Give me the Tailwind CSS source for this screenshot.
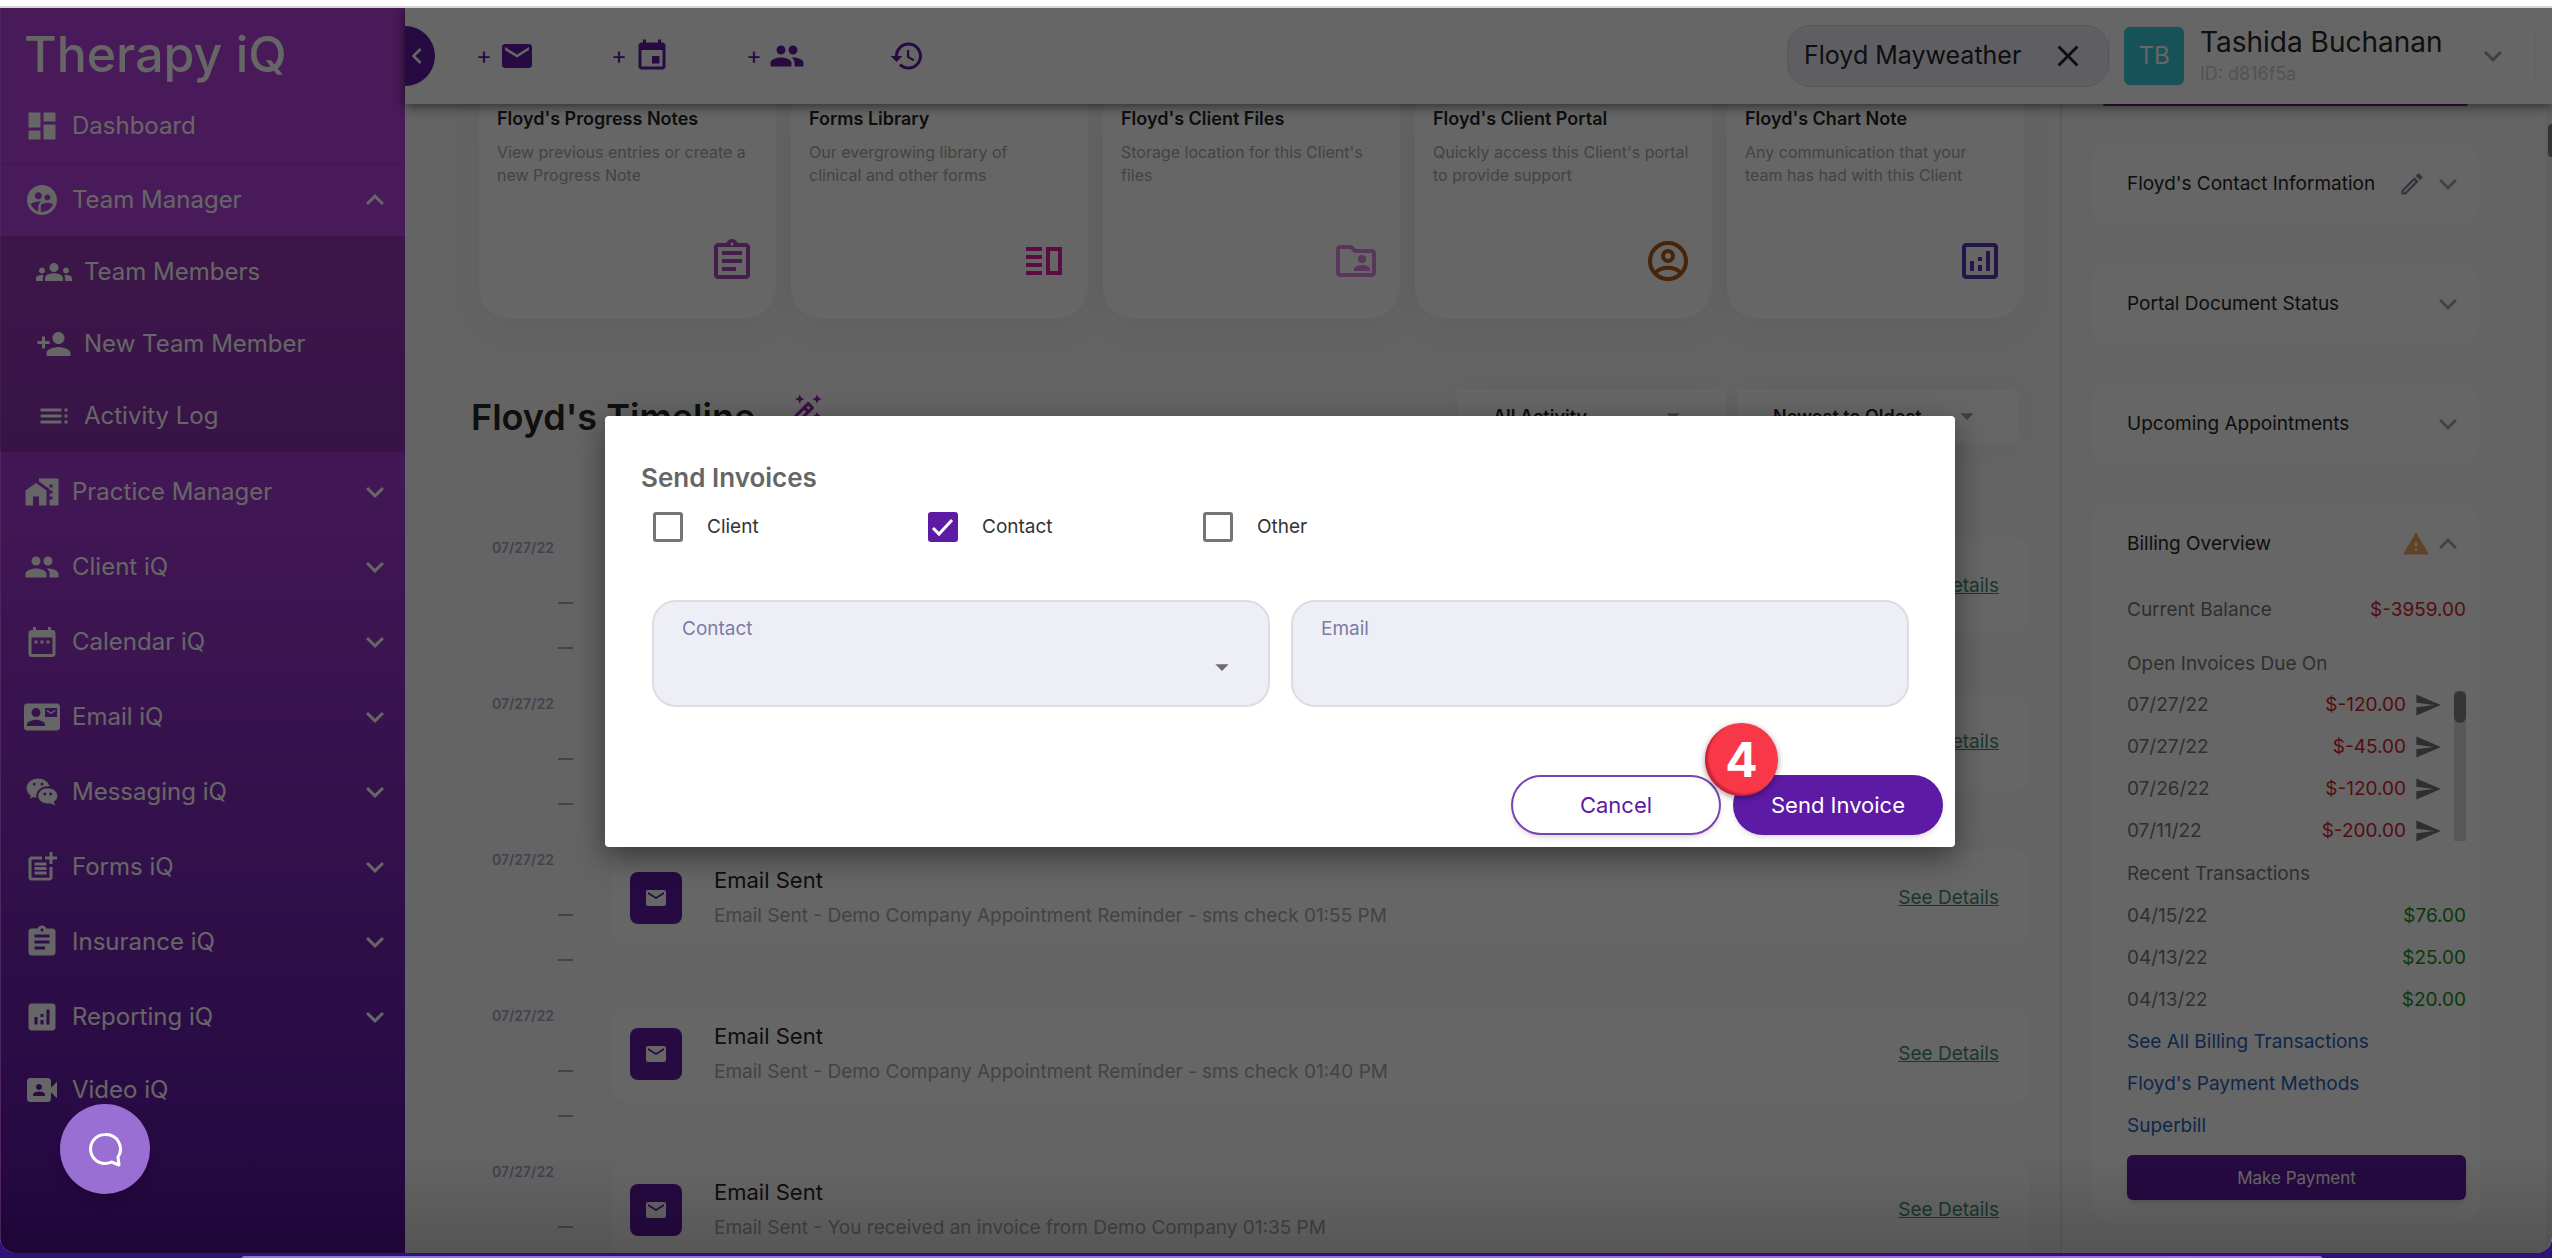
<!DOCTYPE html>
<html lang="en">
<head>
  <meta charset="UTF-8" />
  <meta name="viewport" content="width=device-width, initial-scale=1.0"/>
  <title>Therapy iQ | Send Invoices</title>
  <script src="https://cdn.jsdelivr.net/npm/@tailwindcss/browser@4"></script>
</head>
<body class="h-screen flex flex-col overflow-hidden bg-[#2f1277] font-[Inter,sans-serif] text-[#262626]">

  <!-- Icon set -->
  <svg class="hidden">
    <symbol id="i-dashboard" viewBox="0 0 24 24"><path d="M3 13h8V3H3v10zm0 8h8v-6H3v6zm10 0h8V11h-8v10zm0-18v6h8V3h-8z"/></symbol>
    <symbol id="i-team" viewBox="0 0 24 24"><path d="M11.99 2c-5.52 0-10 4.48-10 10s4.48 10 10 10 10-4.48 10-10-4.48-10-10-10zm3.61 6.34c1.07 0 1.93.86 1.93 1.93 0 1.07-.86 1.93-1.93 1.93-1.07 0-1.93-.86-1.93-1.93-.01-1.07.86-1.93 1.93-1.93zm-6-1.58c1.3 0 2.36 1.06 2.36 2.36 0 1.3-1.06 2.36-2.36 2.36s-2.36-1.06-2.36-2.36c0-1.31 1.05-2.36 2.36-2.36zm0 9.13v3.75c-2.4-.75-4.3-2.6-5.14-4.96 1.05-1.12 3.67-1.69 5.14-1.69.53 0 1.2.08 1.9.22-1.64.87-1.9 2.02-1.9 2.68zM11.99 20c-.27 0-.53-.01-.79-.04v-4.07c0-1.42 2.94-2.13 4.4-2.13 1.07 0 2.92.39 3.84 1.15-1.17 2.97-4.06 5.09-7.45 5.09z"/></symbol>
    <symbol id="i-groups" viewBox="0 0 24 24"><path d="M12 12.75c1.63 0 3.07.39 4.24.9 1.08.48 1.76 1.56 1.76 2.73V18H6v-1.61c0-1.18.68-2.26 1.76-2.73 1.17-.52 2.61-.91 4.24-.91zM4 13c1.1 0 2-.9 2-2s-.9-2-2-2-2 .9-2 2 .9 2 2 2zm1.13 1.1c-.37-.06-.74-.1-1.13-.1-.99 0-1.93.21-2.78.58C.48 14.9 0 15.62 0 16.43V18h4.5v-1.61c0-.83.23-1.61.63-2.29zM20 13c1.1 0 2-.9 2-2s-.9-2-2-2-2 .9-2 2 .9 2 2 2zm4 3.43c0-.81-.48-1.53-1.22-1.85-.85-.37-1.79-.58-2.78-.58-.39 0-.76.04-1.13.1.4.68.63 1.46.63 2.29V18H24v-1.57zM12 6c1.66 0 3 1.34 3 3s-1.34 3-3 3-3-1.34-3-3 1.34-3 3-3z"/></symbol>
    <symbol id="i-person-add" viewBox="0 0 24 24"><path d="M15 12c2.21 0 4-1.79 4-4s-1.79-4-4-4-4 1.79-4 4 1.79 4 4 4zm-9-2V7H4v3H1v2h3v3h2v-3h3v-2H6zm9 4c-2.67 0-8 1.34-8 4v2h16v-2c0-2.66-5.33-4-8-4z"/></symbol>
    <symbol id="i-toc" viewBox="0 0 24 24"><path d="M3 9h14V7H3v2zm0 4h14v-2H3v2zm0 4h14v-2H3v2zm16 0h2v-2h-2v2zm0-10v2h2V7h-2zm0 6h2v-2h-2v2z"/></symbol>
    <symbol id="i-practice" viewBox="0 0 24 24"><path d="M1 11v10h5v-6h4v6h5V11L8 6zM10 3v1.97l7 5V11h2v2h-2v2h2v2h-2v4h6V3H10zm9 6h-2V7h2v2z"/></symbol>
    <symbol id="i-people" viewBox="0 0 24 24"><path d="M16 11c1.66 0 2.99-1.34 2.99-3S17.66 5 16 5c-1.66 0-3 1.34-3 3s1.34 3 3 3zm-8 0c1.66 0 2.99-1.34 2.99-3S9.66 5 8 5C6.34 5 5 6.34 5 8s1.34 3 3 3zm0 2c-2.33 0-7 1.17-7 3.5V19h14v-2.5c0-2.33-4.67-3.5-7-3.5zm8 0c-.29 0-.62.02-.97.05 1.16.84 1.97 1.97 1.97 3.45V19h6v-2.5c0-2.33-4.67-3.5-7-3.5z"/></symbol>
    <symbol id="i-calendar" viewBox="0 0 24 24"><path d="M9 11H7v2h2v-2zm4 0h-2v2h2v-2zm4 0h-2v2h2v-2zm2-7h-1V2h-2v2H8V2H6v2H5c-1.11 0-1.99.9-1.99 2L3 20c0 1.1.89 2 2 2h14c1.1 0 2-.9 2-2V6c0-1.1-.9-2-2-2zm0 16H5V9h14v11z"/></symbol>
    <symbol id="i-contact-mail" viewBox="0 0 24 24"><path d="M21 8V7l-3 2-3-2v1l3 2 3-2zm1-5H2C.9 3 0 3.9 0 5v14c0 1.1.9 2 2 2h20c1.1 0 1.99-.9 1.99-2L24 5c0-1.1-.9-2-2-2zM8 6c1.66 0 3 1.34 3 3s-1.34 3-3 3-3-1.34-3-3 1.34-3 3-3zm6 12H2v-1c0-2 4-3.1 6-3.1s6 1.1 6 3.1v1zm8-6h-8V6h8v6z"/></symbol>
    <symbol id="i-messaging" viewBox="0 0 24 24"><path d="M15.85 8.14c.39 0 .77.03 1.14.08C16.31 5.25 13.19 3 9.44 3c-4.25 0-7.7 2.88-7.7 6.43 0 2.05 1.15 3.86 2.94 5.04L3.67 16.5l2.76-1.19c.59.21 1.21.38 1.87.47-.09-.39-.14-.79-.14-1.21-.01-3.54 3.44-6.43 7.69-6.43zM12 5.89c.53 0 .96.43.96.96s-.43.96-.96.96-.96-.43-.96-.96.43-.96.96-.96zM6.87 7.82c-.53 0-.96-.43-.96-.96s.43-.96.96-.96.96.43.96.96-.43.96-.96.96zM22.26 14.57c0-2.84-2.87-5.14-6.41-5.14s-6.41 2.3-6.41 5.14 2.87 5.14 6.41 5.14c.58 0 1.14-.08 1.67-.2L20.98 21l-1.2-2.4c1.5-.94 2.48-2.38 2.48-4.03zm-8.34-.32c-.53 0-.96-.43-.96-.96s.43-.96.96-.96.96.43.96.96c.01.53-.43.96-.96.96zm3.85 0c-.53 0-.96-.43-.96-.96s.43-.96.96-.96.96.43.96.96-.43.96-.96.96z"/></symbol>
    <symbol id="i-forms" viewBox="0 0 24 24"><path d="M17 19.22H5V7h7V5H5c-1.1 0-2 .9-2 2v12c0 1.1.9 2 2 2h12c1.1 0 2-.9 2-2v-7h-2v7.22zM19 2h-2v3h-3v2h3v3h2V7h3V5h-3V2zM7 9h8v2H7zM7 12h8v2H7zM7 15h8v2H7z"/></symbol>
    <symbol id="i-assignment" viewBox="0 0 24 24"><path d="M19 3h-4.18C14.4 1.84 13.3 1 12 1c-1.3 0-2.4.84-2.82 2H5c-1.1 0-2 .9-2 2v14c0 1.1.9 2 2 2h14c1.1 0 2-.9 2-2V5c0-1.1-.9-2-2-2zm-7 0c.55 0 1 .45 1 1s-.45 1-1 1-1-.45-1-1 .45-1 1-1zm2 14H7v-2h7v2zm3-4H7v-2h10v2zm0-4H7V7h10v2z"/></symbol>
    <symbol id="i-analytics" viewBox="0 0 24 24"><path d="M19 3H5c-1.1 0-2 .9-2 2v14c0 1.1.9 2 2 2h14c1.1 0 2-.9 2-2V5c0-1.1-.9-2-2-2zM9 17H7v-5h2v5zm4 0h-2v-3h2v3zm0-5h-2v-2h2v2zm4 5h-2V7h2v10z"/></symbol>
    <symbol id="i-video" viewBox="0 0 24 24"><path d="M18 10.48V6c0-1.1-.9-2-2-2H4c-1.1 0-2 .9-2 2v12c0 1.1.9 2 2 2h12c1.1 0 2-.9 2-2v-4.48l4 3.98v-11l-4 3.98zM10 8c1.1 0 2 .9 2 2s-.9 2-2 2-2-.9-2-2 .9-2 2-2zm4 8H6v-.57c0-.81.48-1.53 1.22-1.85.85-.37 1.79-.58 2.78-.58.99 0 1.93.21 2.78.58.74.32 1.22 1.04 1.22 1.85V16z"/></symbol>
    <symbol id="i-down" viewBox="0 0 24 24"><path d="M16.59 8.59 12 13.17 7.41 8.59 6 10l6 6 6-6z"/></symbol>
    <symbol id="i-up" viewBox="0 0 24 24"><path d="m12 8-6 6 1.41 1.41L12 10.83l4.59 4.58L18 14z"/></symbol>
    <symbol id="i-left" viewBox="0 0 24 24"><path d="M15.41 7.41 14 6l-6 6 6 6 1.41-1.41L10.83 12z"/></symbol>
    <symbol id="i-mail" viewBox="0 0 24 24"><path d="M20 4H4c-1.1 0-1.99.9-1.99 2L2 18c0 1.1.9 2 2 2h16c1.1 0 2-.9 2-2V6c0-1.1-.9-2-2-2zm0 4-8 5-8-5V6l8 5 8-5v2z"/></symbol>
    <symbol id="i-event" viewBox="0 0 24 24"><path d="M17 12h-5v5h5v-5zM16 1v2H8V1H6v2H5c-1.11 0-1.99.9-1.99 2L3 19c0 1.1.89 2 2 2h14c1.1 0 2-.9 2-2V5c0-1.1-.9-2-2-2h-1V1h-2zm3 18H5V8h14v11z"/></symbol>
    <symbol id="i-history" viewBox="0 0 24 24"><path d="M13 3c-4.97 0-9 4.03-9 9H1l3.89 3.89.07.14L9 12H6c0-3.87 3.13-7 7-7s7 3.13 7 7-3.13 7-7 7c-1.93 0-3.68-.79-4.94-2.06l-1.42 1.42C8.27 19.99 10.51 21 13 21c4.97 0 9-4.03 9-9s-4.03-9-9-9zm-1 5v5l4.28 2.54.72-1.21-3.5-2.08V8H12z"/></symbol>
    <symbol id="i-close" viewBox="0 0 24 24"><path d="M19 6.41 17.59 5 12 10.59 6.41 5 5 6.41 10.59 12 5 17.59 6.41 19 12 13.41 17.59 19 19 17.59 13.41 12z"/></symbol>
    <symbol id="i-notes" viewBox="0 0 24 24"><path fill-rule="evenodd" d="M19 3h-4.18C14.4 1.84 13.3 1 12 1c-1.3 0-2.4.84-2.82 2H5c-1.1 0-2 .9-2 2v14c0 1.1.9 2 2 2h14c1.1 0 2-.9 2-2V5c0-1.1-.9-2-2-2zm-7-.25c.41 0 .75.34.75.75s-.34.75-.75.75-.75-.34-.75-.75.34-.75.75-.75zM19 19H5V5h14v14z"/><path d="M7 7h10v2H7zM7 11h10v2H7zM7 15h7v2H7z"/></symbol>
    <symbol id="i-split" viewBox="0 0 24 24"><path fill-rule="evenodd" d="M3 15h8v-2H3v2zm0 4h8v-2H3v2zm0-8h8V9H3v2zm0-6v2h8V5H3zm10 0h8v14h-8V5zm2 2v10h4V7h-4z"/></symbol>
    <symbol id="i-folder" viewBox="0 0 24 24"><path fill-rule="evenodd" d="M20 6h-8l-2-2H4c-1.1 0-2 .9-2 2v12c0 1.1.9 2 2 2h16c1.1 0 2-.9 2-2V8c0-1.1-.9-2-2-2zm0 12H4V6h5.17l2 2H20v10z"/><circle cx="15" cy="11" r="2"/><path d="M11 17h8v-1c0-1.33-2.67-2-4-2s-4 .67-4 2v1z"/></symbol>
    <symbol id="i-account" viewBox="0 0 24 24"><g fill="none" stroke="currentColor" stroke-width="2"><circle cx="12" cy="12" r="9"/><circle cx="12" cy="9.5" r="2.5"/><path d="M5.8 17.8c1.6-1.6 4-2.4 6.200-2.400s4.600.8 6.200 2.400"/></g></symbol>
    <symbol id="i-chart" viewBox="0 0 24 24"><path fill-rule="evenodd" d="M19 3H5c-1.1 0-2 .9-2 2v14c0 1.1.9 2 2 2h14c1.1 0 2-.9 2-2V5c0-1.1-.9-2-2-2zm0 16H5V5h14v14z"/><path d="M7 12h2v5H7zM15 7h2v10h-2zM11 14h2v3h-2zM11 10h2v2h-2z"/></symbol>
    <symbol id="i-edit" viewBox="0 0 24 24"><path d="m14.060 9.020.92.92L5.920 19H5v-.92l9.060-9.060M17.660 3c-.25 0-.51.1-.7.29l-1.830 1.830 3.750 3.750 1.830-1.830c.39-.39.39-1.020 0-1.410l-2.340-2.340c-.2-.2-.45-.29-.71-.29zm-3.600 3.190L3 17.250V21h3.750L17.810 9.940l-3.750-3.750z"/></symbol>
    <symbol id="i-warning" viewBox="0 0 24 24"><path d="M1 21h22L12 2 1 21zm12-3h-2v-2h2v2zm0-4h-2v-4h2v4z"/></symbol>
    <symbol id="i-send" viewBox="0 0 24 24"><path d="M2.010 21 23 12 2.010 3 2 10l15 2-15 2z"/></symbol>
    <symbol id="i-wand" viewBox="0 0 24 24"><path fill-rule="evenodd" d="m20 7 .94-2.060L23 4l-2.060-.94L20 1l-.94 2.060L17 4l2.060.94zM8.500 7l.94-2.060L11.500 4l-2.060-.94L8.500 1l-.94 2.060L5.500 4l2.060.94zM20 12.500l-.94 2.060-2.060.94 2.060.94.94 2.060.94-2.060L23 15.500l-2.060-.94zM17.710 9.120l-2.830-2.830C14.680 6.100 14.430 6 14.170 6c-.26 0-.51.1-.71.290L2.290 17.460c-.39.39-.39 1.020 0 1.410l2.830 2.830c.2.200.45.300.71.300s.51-.1.710-.29l11.170-11.170c.39-.39.39-1.030 0-1.420zM14.170 8.420l1.410 1.410-1.290 1.290-1.410-1.410 1.290-1.290zM5.830 19.590l-1.410-1.410 7.050-7.050 1.410 1.410-7.050 7.050z"/></symbol>
    <symbol id="i-caret" viewBox="0 0 24 24"><path d="m7 10 5 5 5-5z"/></symbol>
  </svg>

  <div class="h-2 shrink-0 bg-white border-b-2 border-[#d4d6d4]"></div>

  <div class="relative flex-1 min-h-0 flex overflow-hidden rounded-b-2xl bg-[#f9f9f9]">

    <!-- Sidebar -->
    <aside class="w-[405px] shrink-0 bg-linear-to-b from-[#b741df] from-25% to-[#5811a0] shadow-[inset_1px_0_0_#c860ea] text-white text-2xl">
      <div class="h-[84px] pl-6 pt-2 flex items-center text-[50px] leading-none font-medium">Therapy iQ</div>
      <nav>
        <a href="#" class="h-[72px] pl-6 pr-3 pb-1 flex items-center gap-3 border-b border-black/10"><svg class="size-9 fill-current"><use href="#i-dashboard"/></svg>Dashboard</a>
        <a href="#" class="h-[72px] pl-6 pr-3 flex items-center gap-3"><svg class="size-9 fill-current"><use href="#i-team"/></svg>Team Manager<svg class="size-9 fill-current ml-auto"><use href="#i-up"/></svg></a>
        <div class="bg-black/18 mb-[2px]">
          <a href="#" class="h-[72px] pl-9 flex items-center gap-3"><svg class="size-9 fill-current"><use href="#i-groups"/></svg>Team Members</a>
          <a href="#" class="h-[72px] pl-9 flex items-center gap-3"><svg class="size-9 fill-current"><use href="#i-person-add"/></svg>New Team Member</a>
          <a href="#" class="h-[72px] pl-9 flex items-center gap-3"><svg class="size-9 fill-current"><use href="#i-toc"/></svg>Activity Log</a>
        </div>
        <a href="#" class="h-[75px] pl-6 pr-3 flex items-center gap-3"><svg class="size-9 fill-current"><use href="#i-practice"/></svg>Practice Manager<svg class="size-9 fill-current ml-auto"><use href="#i-down"/></svg></a>
        <a href="#" class="h-[75px] pl-6 pr-3 flex items-center gap-3"><svg class="size-9 fill-current"><use href="#i-people"/></svg>Client iQ<svg class="size-9 fill-current ml-auto"><use href="#i-down"/></svg></a>
        <a href="#" class="h-[75px] pl-6 pr-3 flex items-center gap-3"><svg class="size-9 fill-current"><use href="#i-calendar"/></svg>Calendar iQ<svg class="size-9 fill-current ml-auto"><use href="#i-down"/></svg></a>
        <a href="#" class="h-[75px] pl-6 pr-3 flex items-center gap-3"><svg class="size-9 fill-current"><use href="#i-contact-mail"/></svg>Email iQ<svg class="size-9 fill-current ml-auto"><use href="#i-down"/></svg></a>
        <a href="#" class="h-[75px] pl-6 pr-3 flex items-center gap-3"><svg class="size-9 fill-current"><use href="#i-messaging"/></svg>Messaging iQ<svg class="size-9 fill-current ml-auto"><use href="#i-down"/></svg></a>
        <a href="#" class="h-[75px] pl-6 pr-3 flex items-center gap-3"><svg class="size-9 fill-current"><use href="#i-forms"/></svg>Forms iQ<svg class="size-9 fill-current ml-auto"><use href="#i-down"/></svg></a>
        <a href="#" class="h-[75px] pl-6 pr-3 flex items-center gap-3"><svg class="size-9 fill-current"><use href="#i-assignment"/></svg>Insurance iQ<svg class="size-9 fill-current ml-auto"><use href="#i-down"/></svg></a>
        <a href="#" class="h-[75px] pl-6 pr-3 flex items-center gap-3"><svg class="size-9 fill-current"><use href="#i-analytics"/></svg>Reporting iQ<svg class="size-9 fill-current ml-auto"><use href="#i-down"/></svg></a>
        <a href="#" class="h-[72px] pl-6 pr-3 flex items-center gap-3"><svg class="size-9 fill-current"><use href="#i-video"/></svg>Video iQ</a>
      </nav>
    </aside>

    <div class="flex-1 min-w-0 flex flex-col">

      <!-- Top bar -->
      <header class="relative z-10 h-24 shrink-0 flex items-center bg-white shadow-[0_2px_12px_rgba(0,0,0,0.6)] pr-4">
        <button type="button" aria-label="Collapse menu" class="w-[30px] h-[60px] rounded-r-full bg-[#5f19a3] text-white"><svg class="size-8 fill-current -ml-1"><use href="#i-left"/></svg></button>
        <div class="flex items-center ml-[41px] text-[#5f19a3] text-2xl">
          <button type="button" aria-label="New email" class="w-[135px] flex items-center gap-2"><span class="w-[15px]">+</span><svg class="size-9 fill-current"><use href="#i-mail"/></svg></button>
          <button type="button" aria-label="New event" class="w-[135px] flex items-center gap-2"><span class="w-[15px]">+</span><svg class="size-9 fill-current"><use href="#i-event"/></svg></button>
          <button type="button" aria-label="New client" class="w-[135px] flex items-center gap-2"><span class="w-[15px]">+</span><svg class="size-9 fill-current"><use href="#i-people"/></svg></button>
          <button type="button" aria-label="History" class="ml-2"><svg class="size-9 fill-current"><use href="#i-history"/></svg></button>
        </div>
        <div class="ml-auto w-[322px] h-[62px] flex items-center rounded-3xl border border-[#d5d5dc] bg-[#eeeef7] pl-4 pr-[22px]">
          <input type="text" aria-label="Search clients" value="Floyd Mayweather" class="flex-1 min-w-0 text-[25px] outline-none"/>
          <button type="button" aria-label="Clear"><svg class="size-9 fill-current"><use href="#i-close"/></svg></button>
        </div>
        <div class="w-[427px] h-[60px] flex items-center rounded-lg border border-[#f4f4f4] pl-[14px] pr-6">
          <div class="w-[60px] h-[58px] rounded-md bg-[#3accdf] text-white text-2xl flex items-center justify-center">TB</div>
          <div class="ml-4 pt-1">
            <p class="text-[28px] leading-8">Tashida Buchanan</p>
            <p class="text-lg leading-8 text-[#d0d0d0]">ID: d816f5a</p>
          </div>
          <button type="button" aria-label="Account menu" class="ml-auto text-[#a0a0a0]"><svg class="size-9 fill-current"><use href="#i-down"/></svg></button>
        </div>
      </header>

      <div class="flex-1 min-h-0 flex">

        <main class="flex-1 min-w-0 pl-[66px] pr-[30px]">
          <!-- Shortcut cards -->
          <div class="grid grid-cols-5 gap-[15px] ml-2 mr-[6px]">
            <section class="h-[215px] flex flex-col rounded-b-[32px] bg-white shadow-[0_10px_40px_rgba(0,0,0,0.05)] pl-[18px] pr-5 pb-[34px]">
              <h3 class="text-lg font-semibold leading-[30px]">Floyd's Progress Notes</h3>
              <p class="mt-[7px] text-base leading-[23px] text-[#a8a8a8]">View previous entries or create a new Progress Note</p>
              <svg class="size-12 mt-auto ml-auto fill-[#aa4fc4]"><use href="#i-notes"/></svg>
            </section>
            <section class="h-[215px] flex flex-col rounded-b-[32px] bg-white shadow-[0_10px_40px_rgba(0,0,0,0.05)] pl-[18px] pr-5 pb-[34px]">
              <h3 class="text-lg font-semibold leading-[30px]">Forms Library</h3>
              <p class="mt-[7px] text-base leading-[23px] text-[#a8a8a8]">Our evergrowing library of<br>clinical and other forms</p>
              <svg class="size-12 mt-auto ml-auto fill-[#e81ca8]"><use href="#i-split"/></svg>
            </section>
            <section class="h-[215px] flex flex-col rounded-b-[32px] bg-white shadow-[0_10px_40px_rgba(0,0,0,0.05)] pl-[18px] pr-5 pb-[34px]">
              <h3 class="text-lg font-semibold leading-[30px]">Floyd's Client Files</h3>
              <p class="mt-[7px] text-base leading-[23px] text-[#a8a8a8]">Storage location for this Client's files</p>
              <svg class="size-12 mt-auto ml-auto fill-[#dc8be0]"><use href="#i-folder"/></svg>
            </section>
            <section class="h-[215px] flex flex-col rounded-b-[32px] bg-white shadow-[0_10px_40px_rgba(0,0,0,0.05)] pl-[18px] pr-5 pb-[34px]">
              <h3 class="text-lg font-semibold leading-[30px]">Floyd's Client Portal</h3>
              <p class="mt-[7px] text-base leading-[23px] text-[#a8a8a8]">Quickly access this Client's portal to provide support</p>
              <svg class="size-12 mt-auto ml-auto text-[#b55a16]"><use href="#i-account"/></svg>
            </section>
            <section class="h-[215px] flex flex-col rounded-b-[32px] bg-white shadow-[0_10px_40px_rgba(0,0,0,0.05)] pl-[18px] pr-5 pb-[34px]">
              <h3 class="text-lg font-semibold leading-[30px]">Floyd's Chart Note</h3>
              <p class="mt-[7px] text-base leading-[23px] text-[#a8a8a8]">Any communication that your team has had with this Client</p>
              <svg class="size-12 mt-auto ml-auto fill-[#5a35b8]"><use href="#i-chart"/></svg>
            </section>
          </div>

          <!-- Timeline -->
          <div class="mt-[71px] h-[54px] flex items-center pr-[11px]">
            <h2 class="text-4xl font-semibold">Floyd's Timeline</h2>
            <svg class="size-9 ml-8 mb-3 fill-[#9c1fb0]"><use href="#i-wand"/></svg>
            <div class="relative ml-auto w-[268px] h-full">
              <select aria-label="Activity filter" class="appearance-none w-full h-full rounded bg-white shadow-[0_0_30px_rgba(0,0,0,0.03)] pl-9 text-lg font-semibold"><option>All Activity</option></select>
              <svg class="absolute right-9 top-2.5 size-8 fill-[#9a9ec0] pointer-events-none"><use href="#i-caret"/></svg>
            </div>
            <div class="relative ml-3 w-[282px] h-full">
              <select aria-label="Sort order" class="appearance-none w-full h-full rounded bg-white shadow-[0_0_30px_rgba(0,0,0,0.03)] pl-9 text-lg font-semibold"><option>Newest to Oldest</option></select>
              <svg class="absolute right-9 top-2.5 size-8 fill-[#9a9ec0] pointer-events-none"><use href="#i-caret"/></svg>
            </div>
          </div>

          <div class="mt-[94px]">
            <article class="h-[156px] flex">
              <div class="w-[141px] shrink-0 pr-[39px] text-[#a3a7c4]">
                <time class="block pl-[21px] text-sm leading-5 font-semibold">07/27/22</time>
                <div class="mt-11 ml-auto w-[15px] border-t-2 border-current"></div>
                <div class="mt-[43px] ml-auto w-[15px] border-t-2 border-current"></div>
              </div>
              <div class="flex-1 h-24 flex items-start rounded-2xl bg-white px-[18px] pt-[22px] pr-[31px]">
                <div class="size-[52px] rounded-lg bg-[#5f19a3] text-white flex items-center justify-center"><svg class="size-6 fill-current"><use href="#i-mail"/></svg></div>
                <div class="ml-8 -mt-2">
                  <h4 class="text-[22px] leading-8">Email Sent</h4>
                  <p class="mt-1 text-[19px] leading-8 text-[#a8a8a8]">Email Sent - Demo Company Appointment Reminder - sms check 02:10 PM</p>
                </div>
                <a href="#" class="ml-auto mt-3 text-[19px] leading-7 underline text-[#3f8c76]">See Details</a>
              </div>
            </article>
            <article class="h-[156px] flex">
              <div class="w-[141px] shrink-0 pr-[39px] text-[#a3a7c4]">
                <time class="block pl-[21px] text-sm leading-5 font-semibold">07/27/22</time>
                <div class="mt-11 ml-auto w-[15px] border-t-2 border-current"></div>
                <div class="mt-[43px] ml-auto w-[15px] border-t-2 border-current"></div>
              </div>
              <div class="flex-1 h-24 flex items-start rounded-2xl bg-white px-[18px] pt-[22px] pr-[31px]">
                <div class="size-[52px] rounded-lg bg-[#5f19a3] text-white flex items-center justify-center"><svg class="size-6 fill-current"><use href="#i-mail"/></svg></div>
                <div class="ml-8 -mt-2">
                  <h4 class="text-[22px] leading-8">Email Sent</h4>
                  <p class="mt-1 text-[19px] leading-8 text-[#a8a8a8]">Email Sent - Demo Company Appointment Reminder - sms check 02:00 PM</p>
                </div>
                <a href="#" class="ml-auto mt-3 text-[19px] leading-7 underline text-[#3f8c76]">See Details</a>
              </div>
            </article>
            <article class="h-[156px] flex">
              <div class="w-[141px] shrink-0 pr-[39px] text-[#a3a7c4]">
                <time class="block pl-[21px] text-sm leading-5 font-semibold">07/27/22</time>
                <div class="mt-11 ml-auto w-[15px] border-t-2 border-current"></div>
                <div class="mt-[43px] ml-auto w-[15px] border-t-2 border-current"></div>
              </div>
              <div class="flex-1 h-24 flex items-start rounded-2xl bg-white px-[18px] pt-[22px] pr-[31px]">
                <div class="size-[52px] rounded-lg bg-[#5f19a3] text-white flex items-center justify-center"><svg class="size-6 fill-current"><use href="#i-mail"/></svg></div>
                <div class="ml-8 -mt-2">
                  <h4 class="text-[22px] leading-8">Email Sent</h4>
                  <p class="mt-1 text-[19px] leading-8 text-[#a8a8a8]">Email Sent - Demo Company Appointment Reminder - sms check 01:55 PM</p>
                </div>
                <a href="#" class="ml-auto mt-3 text-[19px] leading-7 underline text-[#3f8c76]">See Details</a>
              </div>
            </article>
            <article class="h-[156px] flex">
              <div class="w-[141px] shrink-0 pr-[39px] text-[#a3a7c4]">
                <time class="block pl-[21px] text-sm leading-5 font-semibold">07/27/22</time>
                <div class="mt-11 ml-auto w-[15px] border-t-2 border-current"></div>
                <div class="mt-[43px] ml-auto w-[15px] border-t-2 border-current"></div>
              </div>
              <div class="flex-1 h-24 flex items-start rounded-2xl bg-white px-[18px] pt-[22px] pr-[31px]">
                <div class="size-[52px] rounded-lg bg-[#5f19a3] text-white flex items-center justify-center"><svg class="size-6 fill-current"><use href="#i-mail"/></svg></div>
                <div class="ml-8 -mt-2">
                  <h4 class="text-[22px] leading-8">Email Sent</h4>
                  <p class="mt-1 text-[19px] leading-8 text-[#a8a8a8]">Email Sent - Demo Company Appointment Reminder - sms check 01:40 PM</p>
                </div>
                <a href="#" class="ml-auto mt-3 text-[19px] leading-7 underline text-[#3f8c76]">See Details</a>
              </div>
            </article>
            <article class="h-[156px] flex">
              <div class="w-[141px] shrink-0 pr-[39px] text-[#a3a7c4]">
                <time class="block pl-[21px] text-sm leading-5 font-semibold">07/27/22</time>
                <div class="mt-11 ml-auto w-[15px] border-t-2 border-current"></div>
                <div class="mt-[43px] ml-auto w-[15px] border-t-2 border-current"></div>
              </div>
              <div class="flex-1 h-24 flex items-start rounded-2xl bg-white px-[18px] pt-[22px] pr-[31px]">
                <div class="size-[52px] rounded-lg bg-[#5f19a3] text-white flex items-center justify-center"><svg class="size-6 fill-current"><use href="#i-mail"/></svg></div>
                <div class="ml-8 -mt-2">
                  <h4 class="text-[22px] leading-8">Email Sent</h4>
                  <p class="mt-1 text-[19px] leading-8 text-[#a8a8a8]">Email Sent - You received an invoice from Demo Company 01:35 PM</p>
                </div>
                <a href="#" class="ml-auto mt-3 text-[19px] leading-7 underline text-[#3f8c76]">See Details</a>
              </div>
            </article>
          </div>
        </main>

        <!-- Client panel -->
        <aside class="w-[486px] shrink-0 border-l-2 border-[#e6e6e6] pl-[29px] pr-[66px] text-[19px] leading-7">
          <div class="mx-3 h-[2px] rounded-b bg-[#8b1fa8]"></div>
          <section class="mt-9 h-[84px] flex items-center rounded-3xl bg-white pl-9 pr-[14px]">
            <h3>Floyd's Contact Information</h3>
            <svg class="size-7 ml-auto fill-[#83839f]"><use href="#i-edit"/></svg>
            <svg class="size-9 ml-1 fill-[#a3a7c4]"><use href="#i-down"/></svg>
          </section>
          <section class="mt-9 h-[84px] flex items-center rounded-3xl bg-white pl-9 pr-[14px]">
            <h3>Portal Document Status</h3>
            <svg class="size-9 ml-auto fill-[#a3a7c4]"><use href="#i-down"/></svg>
          </section>
          <section class="mt-9 h-[84px] flex items-center rounded-3xl bg-white pl-9 pr-[14px]">
            <h3>Upcoming Appointments</h3>
            <svg class="size-9 ml-auto fill-[#a3a7c4]"><use href="#i-down"/></svg>
          </section>
          <section class="mt-9 rounded-3xl bg-white pl-9 pr-[14px] pb-[23px] text-[#777]">
            <div class="h-[84px] flex items-center text-[#262626]">
              <h3>Billing Overview</h3>
              <svg class="size-7 ml-auto fill-[#f5a55a]"><use href="#i-warning"/></svg>
              <svg class="size-9 fill-[#a3a7c4]"><use href="#i-up"/></svg>
            </div>
            <p class="mt-2.5 flex justify-between leading-7">Current Balance <span class="text-[#d2232f]">$-3959.00</span></p>
            <h4 class="mt-[26px] leading-7">Open Invoices Due On</h4>
            <div class="mt-[13px] h-[150px] flex overflow-hidden">
              <table class="w-[315px]">
                <tr class="h-[42px] align-top"><td>07/27/22</td><td class="text-right text-[#d2232f]">$-120.00</td><td class="w-9"><svg class="size-7 ml-auto fill-[#777]"><use href="#i-send"/></svg></td></tr>
                <tr class="h-[42px] align-top"><td>07/27/22</td><td class="text-right text-[#d2232f]">$-45.00</td><td class="w-9"><svg class="size-7 ml-auto fill-[#777]"><use href="#i-send"/></svg></td></tr>
                <tr class="h-[42px] align-top"><td>07/26/22</td><td class="text-right text-[#d2232f]">$-120.00</td><td class="w-9"><svg class="size-7 ml-auto fill-[#777]"><use href="#i-send"/></svg></td></tr>
                <tr class="h-[42px] align-top"><td>07/11/22</td><td class="text-right text-[#d2232f]">$-200.00</td><td class="w-9"><svg class="size-7 ml-auto fill-[#777]"><use href="#i-send"/></svg></td></tr>
              </table>
              <div class="ml-auto w-3 bg-[#dcdcdc]"><div class="h-8 rounded-full bg-[#858585]"></div></div>
            </div>
            <h4 class="mt-3 leading-[42px]">Recent Transactions</h4>
            <table class="w-full leading-[42px]">
              <tr><td>04/15/22</td><td class="text-right text-[#1c8c1c]">$76.00</td></tr>
              <tr><td>04/13/22</td><td class="text-right text-[#1c8c1c]">$25.00</td></tr>
              <tr><td>04/13/22</td><td class="text-right text-[#1c8c1c]">$20.00</td></tr>
            </table>
            <div class="flex flex-col items-start leading-[42px] text-[#2a62b8]">
              <a href="#">See All Billing Transactions</a>
              <a href="#">Floyd's Payment Methods</a>
              <a href="#">Superbill</a>
            </div>
            <button type="button" class="mt-2 w-full h-[45px] rounded-md bg-[#5f19a3] text-white text-[17px] shadow-md">Make Payment</button>
          </section>
        </aside>
        <div class="w-1.5 shrink-0 bg-[#f0f0f0] pt-5 pl-[2px]"><div class="h-[33px] rounded-l bg-[#808080]"></div></div>
      </div>
    </div>

    <div class="absolute inset-x-0 bottom-0 h-24 z-20 bg-linear-to-b from-transparent to-black/15"></div>

    <!-- Send invoices dialog -->
    <div class="absolute inset-0 z-30 flex items-center justify-center bg-black/60 pl-2 pt-[2px]">
      <form role="dialog" aria-labelledby="dialogTitle" class="w-[1350px] rounded bg-white shadow-[0_10px_30px_rgba(0,0,0,0.45)] pt-10 pr-3 pb-3">
        <h1 id="dialogTitle" class="ml-9 text-[26px] leading-11 font-semibold text-[#666]">Send Invoices</h1>
        <div class="ml-12 mt-3 flex text-[19px] leading-[30px] text-[#333]">
          <label class="w-[275px] flex items-center gap-6"><input type="checkbox" class="appearance-none size-[30px] rounded-[3px] border-3 border-[#757575]"/>Client</label>
          <label class="relative w-[275px] flex items-center gap-6"><input type="checkbox" checked class="appearance-none size-[30px] rounded-[3px] bg-[#5d1aa5]"/><svg class="absolute left-0 top-0 size-[30px] fill-none stroke-white stroke-3" viewBox="0 0 30 30"><path d="m5 16 6 6L24 8"/></svg>Contact</label>
          <label class="w-[275px] flex items-center gap-6"><input type="checkbox" class="appearance-none size-[30px] rounded-[3px] border-3 border-[#757575]"/>Other</label>
        </div>
        <div class="mt-[58px] ml-[47px] mr-[34px] grid grid-cols-2 gap-[21px] text-[19px]">
          <div class="relative h-[107px] rounded-3xl border-2 border-[#dcdce2] bg-[#eeeef7] px-7 pt-[13px]">
            <label for="contact" class="block leading-7 text-[#7b7ba3]">Contact</label>
            <select id="contact" class="appearance-none w-full h-12 outline-none"><option></option></select>
            <svg class="absolute right-[30px] top-[49px] size-8 fill-[#6b6b6b] pointer-events-none"><use href="#i-caret"/></svg>
          </div>
          <div class="h-[107px] rounded-3xl border-2 border-[#dcdce2] bg-[#eeeef7] px-7 pt-[13px]">
            <label for="email" class="block leading-7 text-[#7b7ba3]">Email</label>
            <input type="email" id="email" class="w-full h-12 outline-none"/>
          </div>
        </div>
        <div class="mt-17 flex justify-end gap-3 text-[22px]">
          <button type="button" class="w-[210px] h-[60px] rounded-full border-2 border-[#7a42b5] text-[#5d1aa5] shadow-md">Cancel</button>
          <div class="relative">
            <button type="submit" class="w-[210px] h-[60px] rounded-full bg-[#5d1aa5] text-white shadow-md">Send Invoice</button>
            <span class="absolute -left-7 -top-[52px] size-[73px] rounded-full bg-[#f83848] text-white text-[48px] font-bold flex items-center justify-center shadow-[inset_3px_-2px_2px_rgba(170,20,40,0.6),0_2px_6px_rgba(0,0,0,0.4)]">4</span>
          </div>
        </div>
      </form>
    </div>

    <!-- Chat launcher -->
    <button type="button" aria-label="Open chat" class="absolute z-40 left-[60px] bottom-[59px] size-[90px] rounded-full bg-[#9a6fd3] shadow-lg flex items-center justify-center">
      <svg class="size-10 fill-none stroke-white stroke-3" viewBox="0 0 40 40" stroke-linejoin="round"><path d="M20 5.500a14.500 14.500 0 1 0 6.500 27.500l7.500 3-1-8A14.500 14.500 0 0 0 20 5.500z"/></svg>
    </button>
  </div>

  <div class="h-[5px] shrink-0 pt-[3px] pl-[242px] pr-[230px]"><div class="h-[2px] rounded-t-full bg-linear-to-r from-[#8a78d8] to-[#b268ec]"></div></div>

</body>
</html>
